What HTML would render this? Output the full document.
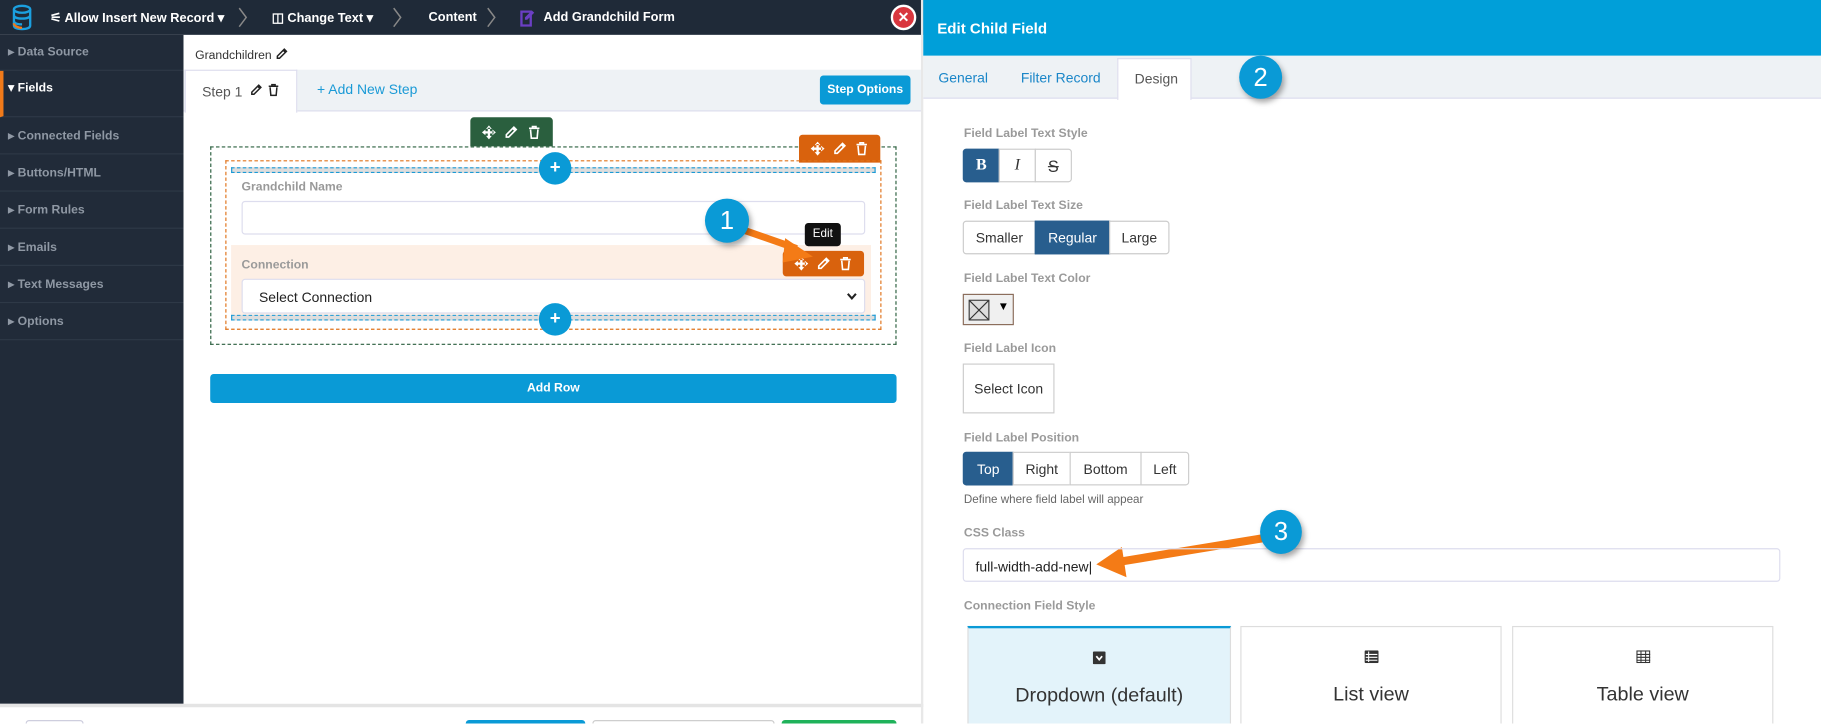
<!DOCTYPE html>
<html><head><meta charset="utf-8"><style>
*{box-sizing:border-box;margin:0;padding:0}
html,body{width:1821px;height:723px;overflow:hidden;background:#fff;font-family:"Liberation Sans",sans-serif}
#w{position:absolute;left:0;top:0;width:1568px;height:623px;transform:scale(1.16135);transform-origin:0 0;overflow:hidden}
.a{position:absolute}
.top{left:0;top:0;width:795px;height:30px;background:#1f2a38;color:#fff;font-size:11px;font-weight:bold}
.top span{position:absolute;top:9px}
.side{left:0;top:30px;width:158px;height:576px;background:#212b39}
.si{position:absolute;left:0;width:158px;color:#8f98a4;font-size:10.5px;font-weight:bold;border-bottom:1px solid #2e3947;padding-left:7px}
.lab{font-size:10.5px;font-weight:bold;color:#9a9a9a}
.btn{position:absolute;border:1px solid #ccc;background:#fff;font-size:12px;color:#333;display:flex;align-items:center;justify-content:center}
.on{background:#285e8e;color:#fff;border-color:#285e8e}
.circ{position:absolute;border-radius:50%;background:#0a9ad6;color:#fff;font-size:22px;display:flex;align-items:center;justify-content:center;box-shadow:2px 3px 5px rgba(0,0,0,.35)}
.plus{position:absolute;width:28px;height:28px;border-radius:50%;background:#0a9ad6;color:#fff;font-weight:bold;font-size:16px;display:flex;align-items:center;justify-content:center}
.tb{position:absolute;color:#fff;display:flex;align-items:center;justify-content:space-around;padding:0 6px}
.card{position:absolute;top:539px;height:90px;border:1px solid #ddd;background:#fff;text-align:center;font-size:17px;color:#333}
</style></head><body><div id="w">
<svg width="0" height="0" style="position:absolute"><defs>
<g id="mv"><path d="M6 0L3.5 3h5zM6 12L3.5 9h5zM0 6L3 3.5v5zM12 6L9 3.5v5zM5 2h2v8H5zM2 5h8v2H2z" fill="currentColor"/></g>
<g id="pn"><path d="M8.5 1.5l2 2L4 10H2V8zM7.5 2.5l2 2" fill="none" stroke="currentColor" stroke-width="1.4"/></g>
<g id="tr"><path d="M1.5 2.5h9M4.5 2.5V1h3v1.5M2.8 3.5l.7 7.5h5l.7-7.5" fill="none" stroke="currentColor" stroke-width="1.4"/></g>
</defs></svg>
<div class="a top">
 <svg class="a" style="left:10px;top:3px" width="18" height="24"><ellipse cx="9" cy="5" rx="7" ry="3" fill="none" stroke="#1ba0e0" stroke-width="2"/><path d="M2 5v14c0 2 3 3 7 3s7-1 7-3V5M2 10c0 2 3 3 7 3s7-1 7-3M2 15c0 2 3 3 7 3" fill="none" stroke="#1ba0e0" stroke-width="2"/><path d="M2 17c0 2 3 4 7 4" stroke="#f07a1a" stroke-width="2" fill="none"/></svg>
 <span style="left:43px">⚟ Allow Insert New Record ▾</span>
 <svg class="a" style="left:204px;top:6px" width="10" height="18"><path d="M2 1l6 8-6 8" fill="none" stroke="#888" stroke-width="1.3"/></svg>
 <span style="left:234px">◫ Change Text ▾</span>
 <svg class="a" style="left:337px;top:6px" width="10" height="18"><path d="M2 1l6 8-6 8" fill="none" stroke="#888" stroke-width="1.3"/></svg>
 <span style="left:369px">Content</span>
 <svg class="a" style="left:418px;top:6px" width="10" height="18"><path d="M2 1l6 8-6 8" fill="none" stroke="#888" stroke-width="1.3"/></svg>
 <svg class="a" style="left:447px;top:7px" width="14" height="16"><path d="M2 3h8v12H2z" fill="none" stroke="#6b3fc4" stroke-width="2"/><path d="M5 8l6-6 2 2-6 6H5z" fill="#6b3fc4"/></svg>
 <span style="left:468px">Add Grandchild Form</span>
 <div class="a" style="left:767px;top:4px;width:22px;height:22px;border-radius:50%;background:#d9363e;border:2px solid #fff;color:#fff;font-size:12px;text-align:center;line-height:18px">✕</div>
</div>
<div class="a side">
 <div class="si" style="top:0;height:31px;line-height:30px">▸ Data Source</div>
 <div class="si" style="top:31px;height:40px;line-height:30px;color:#fff;border-left:3px solid #f07a1a;padding-left:4px">▾ Fields</div>
 <div class="si" style="top:71px;height:32px;line-height:32px">▸ Connected Fields</div>
 <div class="si" style="top:103px;height:32px;line-height:32px">▸ Buttons/HTML</div>
 <div class="si" style="top:135px;height:32px;line-height:32px">▸ Form Rules</div>
 <div class="si" style="top:167px;height:32px;line-height:32px">▸ Emails</div>
 <div class="si" style="top:199px;height:32px;line-height:32px">▸ Text Messages</div>
 <div class="si" style="top:231px;height:32px;line-height:32px">▸ Options</div>
</div>
<div class="a" style="left:0;top:606px;width:795px;height:3px;background:#e4e4e4"></div>
<div class="a" style="left:22px;top:620px;width:50px;height:6px;border:1px solid #ccd;border-bottom:0;border-radius:3px 3px 0 0"></div>
<div class="a" style="left:401px;top:620px;width:103px;height:6px;background:#0a9ad6;border-radius:3px 3px 0 0"></div>
<div class="a" style="left:510px;top:620px;width:157px;height:6px;border:1px solid #ccc;border-bottom:0;border-radius:3px 3px 0 0"></div>
<div class="a" style="left:673px;top:620px;width:99px;height:6px;background:#1fb25a;border-radius:3px 3px 0 0"></div>
<div class="a" style="left:793px;top:0;width:2px;height:623px;background:#e8e8e8"></div>

<div class="a" style="left:168px;top:41px;font-size:10.5px;color:#333">Grandchildren <svg width="11" height="11" style="vertical-align:-1px;color:#222" viewBox="0 0 12 12"><use href="#pn"/></svg></div>
<div class="a" style="left:158px;top:60px;width:635px;height:36px;background:#eef2f5;border-bottom:1px solid #dde"></div>
<div class="a" style="left:159px;top:60px;width:97px;height:37px;background:#fff;border:1px solid #dde;border-bottom:0;font-size:12px;color:#555;padding:11px 0 0 14px">Step 1 &nbsp;<svg width="11" height="11" viewBox="0 0 12 12" style="color:#222"><use href="#pn"/></svg> <svg width="11" height="11" viewBox="0 0 12 12" style="color:#222"><use href="#tr"/></svg></div>
<div class="a" style="left:273px;top:70px;font-size:12px;color:#1a9ad6">+ Add New Step</div>
<div class="a" style="left:706px;top:65px;width:78px;height:25px;background:#0a9ad6;border-radius:3px;color:#fff;font-size:10.5px;font-weight:bold;text-align:center;line-height:25px">Step Options</div>

<div class="tb" style="left:405px;top:101px;width:71px;height:25px;background:#2a5f3e;border-radius:3px 3px 0 0"><svg width="12" height="12"><use href="#mv"/></svg><svg width="12" height="12"><use href="#pn"/></svg><svg width="12" height="12"><use href="#tr"/></svg></div>
<div class="a" style="left:181px;top:126px;width:591px;height:171px;border:1px dashed #2a5f3e"></div>
<div class="tb" style="left:688px;top:116px;width:70px;height:24px;background:#d9620d;border-radius:3px 3px 0 0"><svg width="12" height="12"><use href="#mv"/></svg><svg width="12" height="12"><use href="#pn"/></svg><svg width="12" height="12"><use href="#tr"/></svg></div>
<div class="a" style="left:194px;top:138px;width:565px;height:146px;border:1px dashed #e0731b"></div>
<div class="a" style="left:199px;top:144px;width:555px;height:5px;border:1px dashed #1a9ad6;background:#ddd"></div>
<div class="a" style="left:199px;top:271px;width:555px;height:5px;border:1px dashed #1a9ad6;background:#ddd"></div>
<div class="a lab" style="left:208px;top:155px;color:#999">Grandchild Name</div>
<div class="a" style="left:208px;top:173px;width:537px;height:29px;border:1px solid #dde;border-radius:3px"></div>
<div class="a" style="left:199px;top:211px;width:551px;height:60px;background:#fdefe5"></div>
<div class="a lab" style="left:208px;top:222px">Connection</div>
<div class="tb" style="left:674px;top:216px;width:70px;height:22px;background:#d9620d;border-radius:3px"><svg width="12" height="12"><use href="#mv"/></svg><svg width="12" height="12"><use href="#pn"/></svg><svg width="12" height="12"><use href="#tr"/></svg></div>
<div class="a" style="left:693px;top:192px;width:31px;height:20px;background:#111;color:#fff;font-size:10px;border-radius:3px;text-align:center;line-height:20px">Edit</div>
<div class="a" style="left:208px;top:240px;width:537px;height:30px;border:1px solid #dde;background:#fff;border-radius:3px;font-size:12px;color:#222;padding:8px 14px">Select Connection<svg style="position:absolute;right:6px;top:11px" width="9" height="7"><path d="M1 1l3.5 4L8 1" fill="none" stroke="#222" stroke-width="1.8"/></svg></div>
<div class="plus" style="left:464px;top:131px">+</div>
<div class="plus" style="left:464px;top:261px">+</div>
<div class="a" style="left:181px;top:322px;width:591px;height:25px;background:#0a9ad6;border-radius:3px;color:#fff;font-size:10.5px;font-weight:bold;text-align:center;line-height:25px">Add Row</div>

<svg class="a" style="left:0;top:0" width="1568" height="623">
 <path d="M640 198L686 214" stroke="#f47b16" stroke-width="6"/><path d="M676 205L700 221L674 226Z" fill="#f47b16"/>
 <path d="M1068 64L1036 64" stroke="#f47b16" stroke-width="7"/><path d="M1040 52L1018 64L1040 76Z" fill="#f47b16"/>
 <path d="M1090 463L962 484" stroke="#f47b16" stroke-width="7"/><path d="M966 471L944 486L970 497Z" fill="#f47b16"/>
</svg>
<div class="circ" style="left:607px;top:171px;width:38px;height:38px">1</div>

<div class="a" style="left:795px;top:0;width:773px;height:48px;background:#009fd9;color:#fff;font-weight:bold;font-size:13px;padding:17px 0 0 12px">Edit Child Field</div>
<div class="a" style="left:795px;top:48px;width:773px;height:37px;background:#eef2f5;border-bottom:1px solid #dde"></div>
<div class="a" style="left:808px;top:60px;font-size:12px;color:#1a86c8">General</div>
<div class="a" style="left:879px;top:60px;font-size:12px;color:#1a86c8">Filter Record</div>
<div class="a" style="left:962px;top:50px;width:64px;height:36px;background:#fff;border:1px solid #dde;border-bottom:0;font-size:12px;color:#555;padding:10px 0 0 14px">Design</div>
<div class="circ" style="left:1067px;top:48px;width:37px;height:37px">2</div>

<div class="a lab" style="left:830px;top:109px">Field Label Text Style</div>
<div class="btn on" style="left:829px;top:128px;width:32px;height:29px;border-radius:3px 0 0 3px;font-family:'Liberation Serif',serif;font-weight:bold;font-size:14px">B</div>
<div class="btn" style="left:860px;top:128px;width:32px;height:29px;font-family:'Liberation Serif',serif;font-style:italic;font-size:14px">I</div>
<div class="btn" style="left:891px;top:128px;width:32px;height:29px;border-radius:0 3px 3px 0;text-decoration:line-through;font-size:14px">S</div>
<div class="a lab" style="left:830px;top:171px">Field Label Text Size</div>
<div class="btn" style="left:829px;top:190px;width:63px;height:29px;border-radius:3px 0 0 3px">Smaller</div>
<div class="btn on" style="left:891px;top:190px;width:65px;height:29px">Regular</div>
<div class="btn" style="left:955px;top:190px;width:52px;height:29px;border-radius:0 3px 3px 0">Large</div>
<div class="a lab" style="left:830px;top:234px">Field Label Text Color</div>
<div class="a" style="left:829px;top:253px;width:44px;height:27px;border:1px solid #8a6c5a;background:#f0f0f0"><svg style="position:absolute;left:4px;top:4px" width="18" height="18"><rect x=".5" y=".5" width="17" height="17" fill="#ddd" stroke="#333"/><path d="M1 1L17 17M17 1L1 17" stroke="#333"/></svg><span style="position:absolute;left:29px;top:5px;font-size:10px">▼</span></div>
<div class="a lab" style="left:830px;top:294px">Field Label Icon</div>
<div class="btn" style="left:829px;top:313px;width:79px;height:43px">Select Icon</div>
<div class="a lab" style="left:830px;top:371px">Field Label Position</div>
<div class="btn on" style="left:829px;top:389px;width:44px;height:29px;border-radius:3px 0 0 3px">Top</div>
<div class="btn" style="left:872px;top:389px;width:50px;height:29px">Right</div>
<div class="btn" style="left:921px;top:389px;width:62px;height:29px">Bottom</div>
<div class="btn" style="left:982px;top:389px;width:42px;height:29px;border-radius:0 3px 3px 0">Left</div>
<div class="a" style="left:830px;top:425px;font-size:10px;color:#666">Define where field label will appear</div>
<div class="a lab" style="left:830px;top:453px">CSS Class</div>
<div class="a" style="left:829px;top:472px;width:704px;height:29px;border:1px solid #dde;border-radius:3px;font-size:12px;color:#222;padding:8px 10px">full-width-add-new|</div>
<div class="circ" style="left:1085px;top:439px;width:36px;height:38px">3</div>
<div class="a lab" style="left:830px;top:516px">Connection Field Style</div>
<div class="card" style="left:833px;width:227px;background:#e3f3fa;border-top:2px solid #0a9ad6"><svg style="margin-top:20px" width="11" height="11"><rect width="11" height="11" rx="1" fill="#333"/><path d="M3 4l2.5 3L8 4" stroke="#fff" stroke-width="1.5" fill="none"/></svg><div style="margin-top:12px">Dropdown (default)</div></div>
<div class="card" style="left:1068px;width:225px"><svg style="margin-top:20px" width="12" height="11"><rect width="12" height="11" rx="1" fill="#333"/><path d="M1 3.5h10M1 6h10M1 8.5h10M3.5 1v9" stroke="#fff" stroke-width=".9"/></svg><div style="margin-top:12px">List view</div></div>
<div class="card" style="left:1302px;width:225px"><svg style="margin-top:20px" width="12" height="11"><rect x=".5" y=".5" width="11" height="10" fill="none" stroke="#333"/><path d="M0 3.5h12M0 6h12M0 8.5h12M4 0v11M8 0v11" stroke="#333" stroke-width=".9"/></svg><div style="margin-top:12px">Table view</div></div>
</div></body></html>
